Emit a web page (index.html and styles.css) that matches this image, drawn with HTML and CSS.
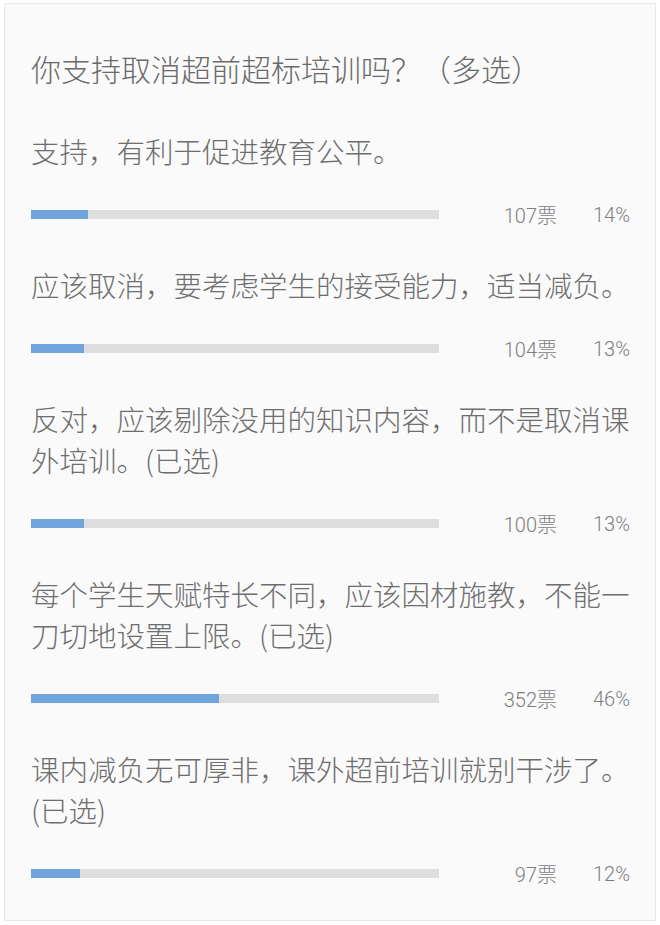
FILE: index.html
```html
<!DOCTYPE html>
<html>
<head>
<meta charset="utf-8">
<title>投票结果</title>
<link rel="stylesheet" href="styles.css">
</head>
<body>
<div class="poll">
    <div class="poll-title">你支持取消超前超标培训吗？（多选）</div>

    <div class="option">
        <div class="option-text">支持，有利于促进教育公平。</div>
        <div class="result">
            <div class="bar"><div class="fill" style="width: 14%"></div></div>
            <span class="votes">107票</span>
            <span class="percent">14%</span>
        </div>
    </div>

    <div class="option">
        <div class="option-text">应该取消，要考虑学生的接受能力，适当减负。</div>
        <div class="result">
            <div class="bar"><div class="fill" style="width: 13%"></div></div>
            <span class="votes">104票</span>
            <span class="percent">13%</span>
        </div>
    </div>

    <div class="option">
        <div class="option-text">反对，应该剔除没用的知识内容，而不是取消课外培训。(已选)</div>
        <div class="result">
            <div class="bar"><div class="fill" style="width: 13%"></div></div>
            <span class="votes">100票</span>
            <span class="percent">13%</span>
        </div>
    </div>

    <div class="option">
        <div class="option-text">每个学生天赋特长不同，应该因材施教，不能一刀切地设置上限。(已选)</div>
        <div class="result">
            <div class="bar"><div class="fill" style="width: 46%"></div></div>
            <span class="votes">352票</span>
            <span class="percent">46%</span>
        </div>
    </div>

    <div class="option">
        <div class="option-text">课内减负无可厚非，课外超前培训就别干涉了。(已选)</div>
        <div class="result">
            <div class="bar"><div class="fill" style="width: 12%"></div></div>
            <span class="votes">97票</span>
            <span class="percent">12%</span>
        </div>
    </div>
</div>
</body>
</html>
```

FILE: styles.css
```css
body {
    margin: 0;
    background-color: #ffffff;
    font-family: "Noto Sans CJK SC", "Noto Sans", sans-serif;
}

.poll {
    margin: 3px 4px;
    height: 918px;
    box-sizing: border-box;
    padding: 44px 26px 0 26px;
    background-color: #fafafa;
    border: 1px solid #e8e8e8;
}

.poll-title {
    font-size: 30px;
    font-weight: 300;
    line-height: 40px;
    color: #6a6a6a;
    margin-bottom: 42px;
}

.option {
    margin-bottom: 40px;
}

.option-text {
    width: 602px;
    font-size: 28.5px;
    font-weight: 300;
    line-height: 41px;
    color: #6e6e6e;
}

.result {
    display: grid;
    grid-template-columns: 408px 118px 73px;
    align-items: center;
    height: 24px;
    margin-top: 29px;
}

.bar {
    height: 9px;
    background-color: #dedede;
}

.fill {
    height: 100%;
    background-color: #70a4dc;
}

.votes,
.percent {
    font-family: Roboto, "Noto Sans CJK SC", sans-serif;
    font-size: 20px;
    font-weight: 300;
    color: #7e7e7e;
    text-align: right;
}
```
